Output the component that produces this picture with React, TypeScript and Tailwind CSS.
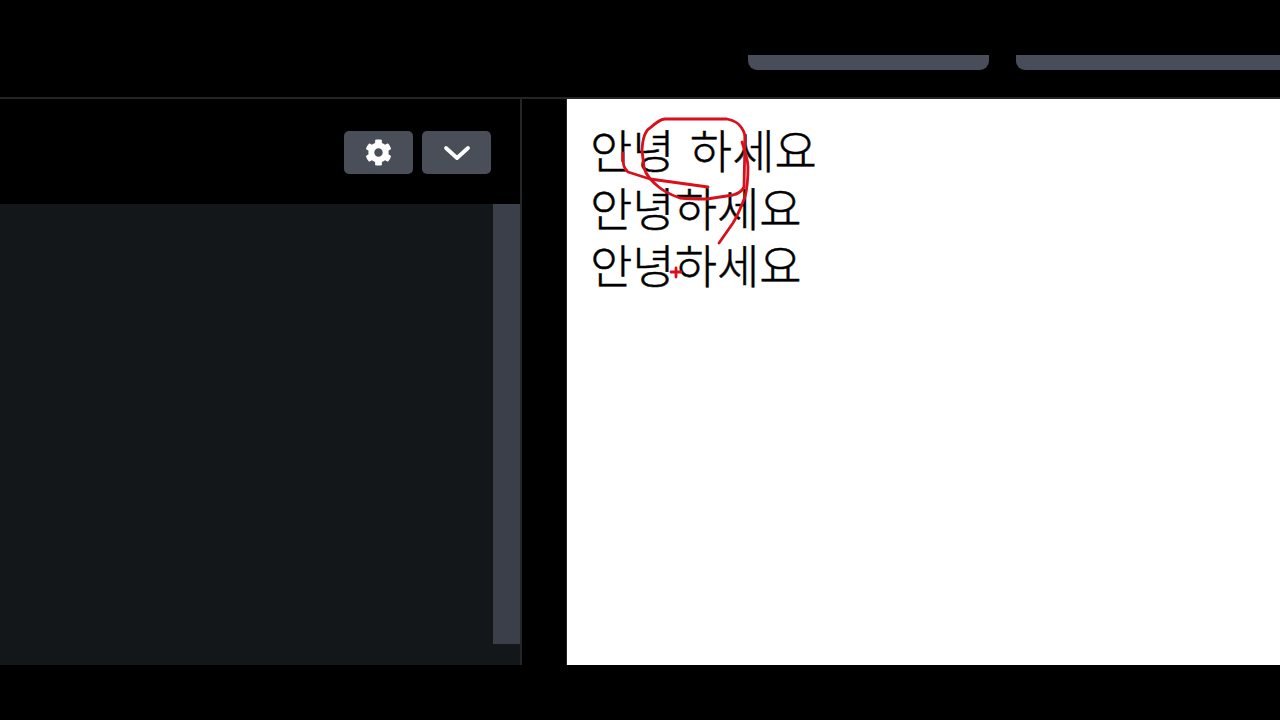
import { FaCog } from "react-icons/fa";

const lines = ["안녕 하세요", "안녕하세요", "안녕하세요"];

export default function App() {
  return (
    <div className="flex h-[720px] w-[1280px] flex-col overflow-hidden bg-black">
      {/* top bar with the cut-off tabs */}
      <div className="flex h-[97px] shrink-0 gap-[27px] pl-[748px] pt-[55px]">
        <div className="h-[15px] w-[241px] rounded-b-[9px] bg-[#484d59]" />
        <div className="h-[15px] w-[264px] shrink-0 rounded-bl-[9px] bg-[#484d59]" />
      </div>
      <div className="h-[2px] shrink-0 bg-[#242527]" />

      <div className="flex h-[566px] shrink-0">
        {/* left panel */}
        <div className="flex w-[522px] shrink-0 flex-col border-r-2 border-[#242527]">
          <div className="flex h-[105px] shrink-0 items-start justify-end gap-[9px] pr-[29px] pt-[32px]">
            <button className="flex h-[43px] w-[69px] items-center justify-center rounded-[5px] bg-[#4a4e59] text-white">
              <FaCog className="h-[27px] w-[27px]" />
            </button>
            <button className="flex h-[43px] w-[69px] items-center justify-center rounded-[5px] bg-[#4a4e59] text-white">
              <svg width="28" height="16" viewBox="0 0 28 16" fill="none" stroke="currentColor" strokeWidth="3.8" strokeLinecap="round" strokeLinejoin="round">
                <path d="M3 3 L14 13 L25 3" />
              </svg>
            </button>
          </div>
          <div className="flex min-h-0 flex-1 justify-end bg-[#131719] pb-[21px]">
            <div className="w-[27px] bg-[#3a3f49]" />
          </div>
        </div>

        {/* right panel */}
        <div className="relative ml-[44px] flex-1 border-l border-[#242527] bg-white pl-[23px] pt-[21px] font-['Noto_Sans_CJK_KR','Noto_Sans_CJK_JP',sans-serif] text-[46px] font-light leading-[57.5px] text-black [-webkit-text-stroke:0.5px_black] [word-spacing:5px]">
          {lines.map((line, index) => (
            <div key={index}>{line}</div>
          ))}
          {/* hand-drawn red marks */}
          <svg className="absolute left-0 top-0" width="713" height="566" viewBox="567 99 713 566" fill="none" stroke="#d8101c" strokeWidth="2.8" strokeLinecap="round" strokeLinejoin="round">
            <path d="M708 187 L650 179 L628 172 Q622 168 623 153" />
            <path d="M642 150 Q643 132 650 128 Q660 119 665 119 L727 119 Q737 121 741 127 Q746 134 745 140 L744 187 Q741 193 733 195 L707 199 Q690 199 680 198 Q668 194 660 188 Q647 178 644 168 Z" />
            <path d="M742 142 Q748 160 748 167 Q748 185 745 197 Q738 215 733 223 L719 243" />
            <path d="M671 272 L681 272 M676 268 L676 277" />
          </svg>
        </div>
      </div>
    </div>
  );
}
